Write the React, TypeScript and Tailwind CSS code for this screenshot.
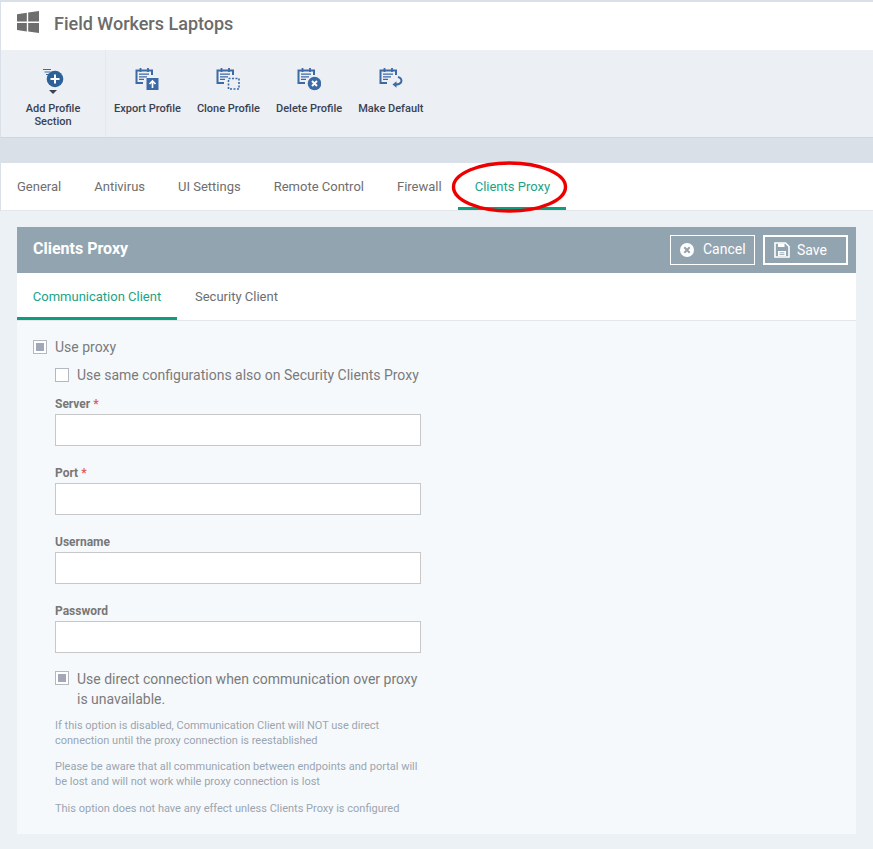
const mainTabs = ["General", "Antivirus", "UI Settings", "Remote Control", "Firewall"];

// clipboard sheet shared by the four toolbar icons
function Sheet() {
  return (
    <g fill="none" stroke="#3c6aa5">
      <path d="M8 16H1.5V3.5H17V8" strokeWidth="2" />
      <path d="M5.5 1v4M13 1v4" strokeWidth="1.8" />
      <path d="M4 7.2h10M4 9.8h8M4 12.4h5" strokeWidth="1.3" />
    </g>
  );
}

function ExportIcon() {
  return (
    <svg width="24" height="24" viewBox="0 0 24 24">
      <Sheet />
      <rect x="11.5" y="11" width="12" height="12" fill="#3c6aa5" />
      <path d="M17.5 21v-7M14.5 17l3-3 3 3" fill="none" stroke="#fff" strokeWidth="1.7" />
    </svg>
  );
}

function CloneIcon() {
  return (
    <svg width="24" height="24" viewBox="0 0 24 24">
      <Sheet />
      <rect x="12.5" y="11.5" width="10.5" height="10.5" fill="#eceff4" stroke="#3c6aa5" strokeWidth="1.6" strokeDasharray="2 1.5" />
    </svg>
  );
}

function DeleteIcon() {
  return (
    <svg width="24" height="24" viewBox="0 0 24 24">
      <Sheet />
      <circle cx="17.5" cy="16.5" r="6.8" fill="#3c6aa5" />
      <path d="M15 14l5 5M20 14l-5 5" stroke="#fff" strokeWidth="1.9" />
    </svg>
  );
}

function DefaultIcon() {
  return (
    <svg width="24" height="24" viewBox="0 0 24 24">
      <Sheet />
      <path d="M19 10c3 .6 4 3 3.2 5-.8 1.8-2.6 2.6-6.2 2.5" fill="none" stroke="#3c6aa5" strokeWidth="2" />
      <path d="M17.5 14.2l-4 3.3 4 3.3z" fill="#3c6aa5" />
    </svg>
  );
}

function AddIcon() {
  return (
    <svg width="24" height="30" viewBox="0 0 24 30">
      <path d="M2 1.5h8M3.5 4h6M5 6.5h4M6.5 9h2" stroke="#3c6aa5" strokeWidth="1" />
      <circle cx="14" cy="11" r="8.3" fill="#2f6199" />
      <path d="M14 6.5v9M9.5 11h9" stroke="#fff" strokeWidth="2" />
      <path d="M8 22h8l-4 4z" fill="#3d4450" />
    </svg>
  );
}

function WindowsLogo() {
  return (
    <svg width="23" height="22" viewBox="0 0 23 22">
      <path d="M0 3.2l9.8-1.5v8.8H0zM11.2 1.5L22 0v10.5H11.2zM0 11.9h9.8v8.6L0 19zM11.2 11.9H22V22l-10.8-1.6z" fill="#6e6e6e" />
    </svg>
  );
}

function CancelIcon() {
  return (
    <svg width="14" height="14" viewBox="0 0 14 14" className="shrink-0">
      <circle cx="7" cy="7" r="7" fill="#fff" />
      <path d="M4.3 4.3l5.4 5.4M9.7 4.3l-5.4 5.4" stroke="#93a4b1" strokeWidth="2" />
    </svg>
  );
}

function SaveIcon() {
  return (
    <svg width="16" height="16" viewBox="0 0 16 16" className="shrink-0">
      <path d="M1 1h10.5L15 4.5V15H1z" fill="none" stroke="#fff" strokeWidth="1.6" />
      <path d="M4 1.5h6.5v3.5H4z" fill="#fff" />
      <path d="M4 9h8v5H4z" fill="#fff" />
      <path d="M5.5 10.8h5M5.5 12.6h5" stroke="#93a4b1" strokeWidth="0.9" />
    </svg>
  );
}

function ToolButton({ icon, label }: { icon: React.ReactNode; label: string }) {
  return (
    <div className="flex flex-col items-center px-2">
      <div className="h-[24px] flex items-center">{icon}</div>
      <span className="mt-[11px] text-[11px] leading-[13px] font-medium text-[#3a4252] whitespace-nowrap">{label}</span>
    </div>
  );
}

function Check({ checked }: { checked?: boolean }) {
  return (
    <span className="w-[14px] h-[14px] shrink-0 border border-[#b4b8c0] bg-white flex items-center justify-center">
      {checked && <span className="w-[8px] h-[8px] bg-[#a3a8b8]" />}
    </span>
  );
}

function Field({ label, required }: { label: string; required?: boolean }) {
  return (
    <div className="ml-[38px] w-[366px] h-[51px] mb-[18px]">
      <div className="h-[19px] text-[12px] leading-[18px] font-bold text-[#777]">
        {label}
        {required && <span className="text-[#e0595f]"> *</span>}
      </div>
      <input className="block w-full h-[32px] bg-white border border-[#c8c8c8] outline-none" />
    </div>
  );
}

export default function App() {
  return (
    <div className="relative w-[873px] h-[849px] overflow-hidden bg-[#ecf1f5] font-['Roboto',sans-serif]">
      <div className="h-[50px] pt-[2px] bg-white border-t-[2px] border-[#d9e0e8] border-l-[1px] flex items-center">
        <div className="ml-[16px] mb-[11px]">
          <WindowsLogo />
        </div>
        <h1 className="ml-[14px] mb-[8px] text-[18px] font-medium text-[#6b6b6b]">Field Workers Laptops</h1>
      </div>

      <div className="h-[88px] flex bg-[#eceff4] border-b border-[#d0d6de] border-l-[1px] border-l-[#d9e0e8]">
        <div className="w-[105px] border-r border-[#e5e8ee] pt-[18px] flex flex-col items-center">
          <div className="h-[30px]">
            <AddIcon />
          </div>
          <span className="mt-[4px] text-[11px] leading-[13px] font-medium text-[#3a4252] text-center">
            Add Profile
            <br />
            Section
          </span>
        </div>
        <div className="pt-[17px] flex">
          <ToolButton icon={<ExportIcon />} label="Export Profile" />
          <ToolButton icon={<CloneIcon />} label="Clone Profile" />
          <ToolButton icon={<DeleteIcon />} label="Delete Profile" />
          <ToolButton icon={<DefaultIcon />} label="Make Default" />
        </div>
      </div>

      <div className="h-[25px] bg-[#d9e0e8]" />

      <div className="h-[48px] bg-white border-b border-[#e3e7ec] border-l-[1px] border-l-[#d9e0e8] pl-[16px] flex text-[13px] text-[#6e6e6e]">
        {mainTabs.map((t) => (
          <div key={t} className="mr-[33px] h-[47px] flex items-center">
            {t}
          </div>
        ))}
        <div className="-ml-[17px] h-[47px] pl-[17px] pr-[16px] flex items-center text-[#1ba387] border-b-[3px] border-[#0f9d80] pt-[3px]">
          Clients Proxy
        </div>
      </div>

      <div className="mx-[17px] mt-[16px] w-[839px]">
        <div className="h-[46px] bg-[#93a4b1] pl-[16px] pr-[8px] flex items-center">
          <h2 className="text-[16px] font-bold text-white pb-[2px]">Clients Proxy</h2>
          <div className="ml-auto flex items-center gap-[8px]">
            <button className="w-[85px] h-[30px] border border-white text-[14px] text-white flex items-center pl-[9px] gap-[9px] pb-[1px]">
              <CancelIcon />
              Cancel
            </button>
            <button className="w-[85px] h-[30px] border-2 border-white text-[14px] text-white flex items-center pl-[9px] gap-[7px]">
              <SaveIcon />
              Save
            </button>
          </div>
        </div>

        <div className="h-[48px] bg-white border-b border-[#e3e7ec] flex text-[13px]">
          <div className="w-[160px] h-[47px] flex items-center justify-center text-[#1ba387] border-b-[3px] border-[#0f9d80] pt-[3px]">
            Communication Client
          </div>
          <div className="ml-[18px] h-[47px] flex items-center text-[#6e6e6e]">Security Client</div>
        </div>

        <div className="h-[513px] bg-[#f6f9fb] pt-[18px]">
          <label className="ml-[16px] flex items-center gap-[8px] h-[16px] text-[14px] text-[#7b7b7b]">
            <Check checked />
            Use proxy
          </label>
          <label className="ml-[38px] mt-[12px] flex items-center gap-[8px] h-[16px] text-[14px] text-[#7b7b7b]">
            <Check />
            Use same configurations also on Security Clients Proxy
          </label>
          <div className="mt-[12px]">
            <Field label="Server" required />
            <Field label="Port" required />
            <Field label="Username" />
            <Field label="Password" />
          </div>
          <div className="ml-[38px] w-[366px] -mt-[2px] flex gap-[8px] text-[14px] leading-[20px] text-[#7b7b7b]">
            <span className="mt-[2px]">
              <Check checked />
            </span>
            <span>Use direct connection when communication over proxy is unavailable.</span>
          </div>
          <div className="ml-[38px] w-[366px] mt-[9px] text-[11px] leading-[15px] text-[#9aa5b1]">
            <p>If this option is disabled, Communication Client will NOT use direct connection until the proxy connection is reestablished</p>
            <p className="mt-[11px]">Please be aware that all communication between endpoints and portal will be lost and will not work while proxy connection is lost</p>
            <p className="mt-[12px]">This option does not have any effect unless Clients Proxy is configured</p>
          </div>
        </div>
      </div>

      {/* red hand-drawn ring over the active tab */}
      <svg className="absolute left-[450px] top-[160px]" width="120" height="55" viewBox="0 0 120 55">
        <ellipse cx="59.5" cy="27" rx="56" ry="24" fill="none" stroke="#ee0000" strokeWidth="3.4" />
      </svg>
    </div>
  );
}
